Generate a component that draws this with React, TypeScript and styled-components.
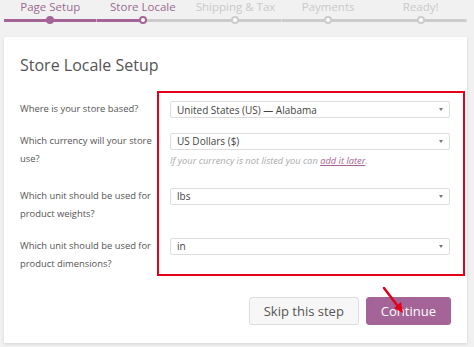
import { Fragment } from 'react';
import styled, { createGlobalStyle } from 'styled-components';

const purple = '#a46497';
const grey = '#ccc';

const GlobalStyle = createGlobalStyle`
  html, body {
    margin: 0;
    padding: 0;
    background: #f1f1f1;
    font-family: "Open Sans", "Noto Sans", sans-serif;
    color: #555;
  }
`;

const Page = styled.div`
  width: 474px;
  height: 347px;
  overflow: hidden;
  box-sizing: border-box;
  padding: 0 7px 0 4px;
`;

const Steps = styled.ol`
  list-style: none;
  margin: 0;
  padding: 0;
  display: grid;
  grid-template-columns: repeat(5, 1fr);
`;

type StepState = 'done' | 'active' | 'todo';

const Step = styled.li`
  display: flex;
  flex-direction: column;
  align-items: center;
`;

const StepLabel = styled.span<{ $state: StepState }>`
  font-size: 11.5px;
  line-height: 13px;
  color: ${p => (p.$state === 'todo' ? '#c9c9c9' : '#9a6a91')};
  white-space: nowrap;
`;

const Track = styled.div<{ $state: StepState }>`
  align-self: stretch;
  height: 14px;
  display: flex;
  align-items: center;
  justify-content: center;
  background:
    linear-gradient(${p => (p.$state === 'todo' ? grey : purple)}, ${p => (p.$state === 'todo' ? grey : purple)}) left center / 50% 3px no-repeat,
    linear-gradient(${p => (p.$state === 'done' ? purple : grey)}, ${p => (p.$state === 'done' ? purple : grey)}) right center / 50% 3px no-repeat;
`;

const Dot = styled.span<{ $state: StepState }>`
  width: 4px;
  height: 4px;
  border-radius: 50%;
  border: 2px solid ${p => (p.$state === 'todo' ? grey : purple)};
  background: ${p => (p.$state === 'done' ? purple : '#fff')};
`;

const Card = styled.section`
  margin-top: 10px;
  background: #fff;
  box-shadow: 0 1px 3px rgba(0, 0, 0, 0.13);
  padding: 17px 16px 16px;
  height: 306px;
  box-sizing: border-box;
`;

const Title = styled.h1`
  margin: 0 0 25px;
  font-size: 16px;
  font-weight: 400;
  line-height: 22px;
  color: #555;
`;

const Form = styled.div`
  display: grid;
  grid-template-columns: 150px 280px;
  row-gap: 14px;
`;

const Frame = styled.div`
  grid-column: 2;
  grid-row: 1 / 5;
  margin: -10px -15px -2px -13px;
  border: 2px solid #e2001a;
  pointer-events: none;
`;

const Label = styled.label<{ $row: number }>`
  grid-column: 1;
  grid-row: ${p => p.$row};
  font-size: 9.4px;
  line-height: 18.5px;
  margin-top: -1px;
  color: #555;
  padding-right: 4px;
`;

const Field = styled.div<{ $row: number }>`
  grid-column: 2;
  grid-row: ${p => p.$row};
`;

const Select = styled.div`
  height: 17px;
  box-sizing: border-box;
  border: 1px solid #ddd;
  border-radius: 2px;
  background: #fff;
  display: flex;
  align-items: center;
  justify-content: space-between;
  padding: 0 6px;
  font-size: 10px;
  color: #444;
`;

const Caret = styled.span`
  width: 0;
  height: 0;
  border-left: 2.5px solid transparent;
  border-right: 2.5px solid transparent;
  border-top: 3px solid #777;
`;

const Hint = styled.p`
  margin: 1px 0 4px;
  font-size: 9.3px;
  line-height: 19px;
  font-style: italic;
  color: #aaa;

  a {
    color: ${purple};
    text-decoration: underline;
  }
`;

const Actions = styled.div`
  display: flex;
  justify-content: flex-end;
  gap: 7px;
  margin-top: 23px;
`;

const Button = styled.button<{ $primary?: boolean }>`
  position: relative;
  height: 28px;
  padding: 0 14px;
  font-family: inherit;
  font-size: 13px;
  border-radius: 3px;
  border: 1px solid ${p => (p.$primary ? purple : '#ddd')};
  background: ${p => (p.$primary ? purple : '#f7f7f7')};
  color: ${p => (p.$primary ? '#fff' : '#555')};
`;

const Arrow = styled.svg`
  position: absolute;
  left: 16px;
  top: -11px;
  overflow: visible;
  pointer-events: none;
`;

const steps: { name: string; state: StepState }[] = [
  { name: 'Page Setup', state: 'done' },
  { name: 'Store Locale', state: 'active' },
  { name: 'Shipping & Tax', state: 'todo' },
  { name: 'Payments', state: 'todo' },
  { name: 'Ready!', state: 'todo' },
];

const fields = [
  { label: 'Where is your store based?', value: 'United States (US) — Alabama' },
  { label: 'Which currency will your store use?', value: 'US Dollars ($)', hint: true },
  { label: 'Which unit should be used for product weights?', value: 'lbs' },
  { label: 'Which unit should be used for product dimensions?', value: 'in' },
];

export default function App() {
  return (
    <>
      <GlobalStyle />
      <Page>
        <Steps>
          {steps.map(s => (
            <Step key={s.name}>
              <StepLabel $state={s.state}>{s.name}</StepLabel>
              <Track $state={s.state}>
                <Dot $state={s.state} />
              </Track>
            </Step>
          ))}
        </Steps>

        <Card>
          <Title>Store Locale Setup</Title>
          <Form>
            {fields.map((f, i) => (
              <Fragment key={f.label}>
                <Label $row={i + 1}>{f.label}</Label>
                <Field $row={i + 1}>
                  <Select>
                    <span>{f.value}</span>
                    <Caret />
                  </Select>
                  {f.hint && (
                    <Hint>
                      If your currency is not listed you can <a href="#">add it later</a>.
                    </Hint>
                  )}
                </Field>
              </Fragment>
            ))}
            <Frame />
          </Form>
          <Actions>
            <Button>Skip this step</Button>
            <Button $primary>
              Continue
              <Arrow width="24" height="28" viewBox="0 0 24 28">
                <line x1="1" y1="1" x2="17" y2="22" stroke="#e2001a" strokeWidth="2.5" strokeLinecap="round" />
                <polygon points="20,26 11,21 18,15" fill="#e2001a" />
              </Arrow>
            </Button>
          </Actions>
        </Card>
      </Page>
    </>
  );
}
